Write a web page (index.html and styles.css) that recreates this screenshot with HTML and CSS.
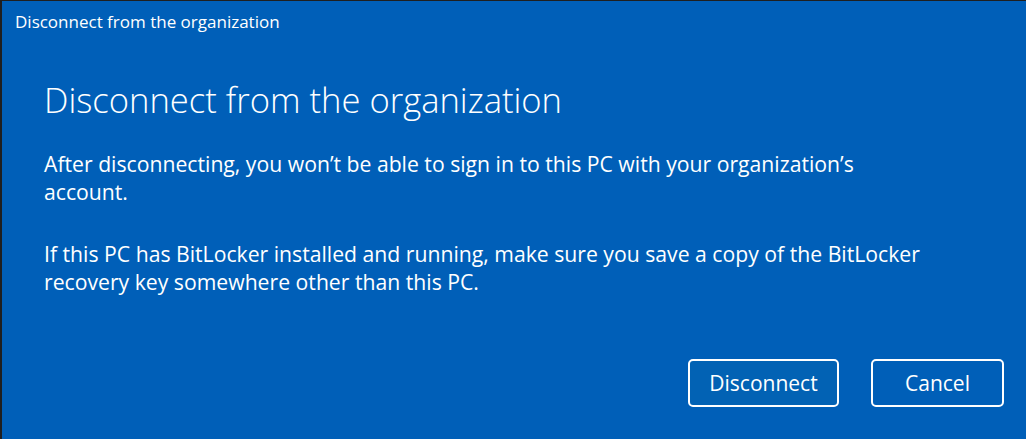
FILE: index.html
```html
<!DOCTYPE html>
<html>
<head>
<meta charset="utf-8">
<link rel="stylesheet" href="styles.css">
</head>
<body>
<div class="window">
  <div class="titlebar">Disconnect from the organization</div>
  <div class="content">
    <h1 class="heading">Disconnect from the organization</h1>
    <p class="para">After disconnecting, you won’t be able to sign in to this PC with your organization’s account.</p>
    <p class="para">If this PC has BitLocker installed and running, make sure you save a copy of the BitLocker recovery key somewhere other than this PC.</p>
  </div>
  <div class="actions">
    <button class="btn btn-primary">Disconnect</button>
    <button class="btn">Cancel</button>
  </div>
</div>
</body>
</html>
```
FILE: styles.css
```css
html, body {
  margin: 0;
  padding: 0;
  width: 1026px;
  height: 439px;
  overflow: hidden;
  background: #1f1f1f;
}
.window {
  box-sizing: border-box;
  width: 1024px;
  height: 438px;
  margin-top: 1px;
  margin-left: 2px;
  background: #005fb8;
  color: #fff;
  font-family: "Open Sans", "Noto Sans", sans-serif;
  display: flex;
  flex-direction: column;
}
.titlebar {
  height: 43px;
  padding-left: 13px;
  font-size: 17px;
  line-height: 43px;
  margin-top: -1px;
}
.content {
  padding: 0 40px 0 42px;
  flex: 1;
}
.heading {
  margin: 37px 0 30px;
  font-size: 34.6px;
  font-weight: 300;
  line-height: 40px;
}
.para {
  margin: 0 0 34px;
  font-size: 21.2px;
  line-height: 28px;
  max-width: 885px;
}
.actions {
  display: flex;
  justify-content: flex-end;
  gap: 32px;
  padding: 0 22px 32px 0;
}
.btn {
  font-family: "Open Sans", "Noto Sans", sans-serif;
  color: #fff;
  background: #005fb8;
  border: 2px solid #fff;
  border-radius: 5px;
  height: 48px;
  font-size: 21px;
  width: 133px;
  padding: 0;
}
.btn-primary {
  background: #0262b4;
  width: 151px;
}
```
